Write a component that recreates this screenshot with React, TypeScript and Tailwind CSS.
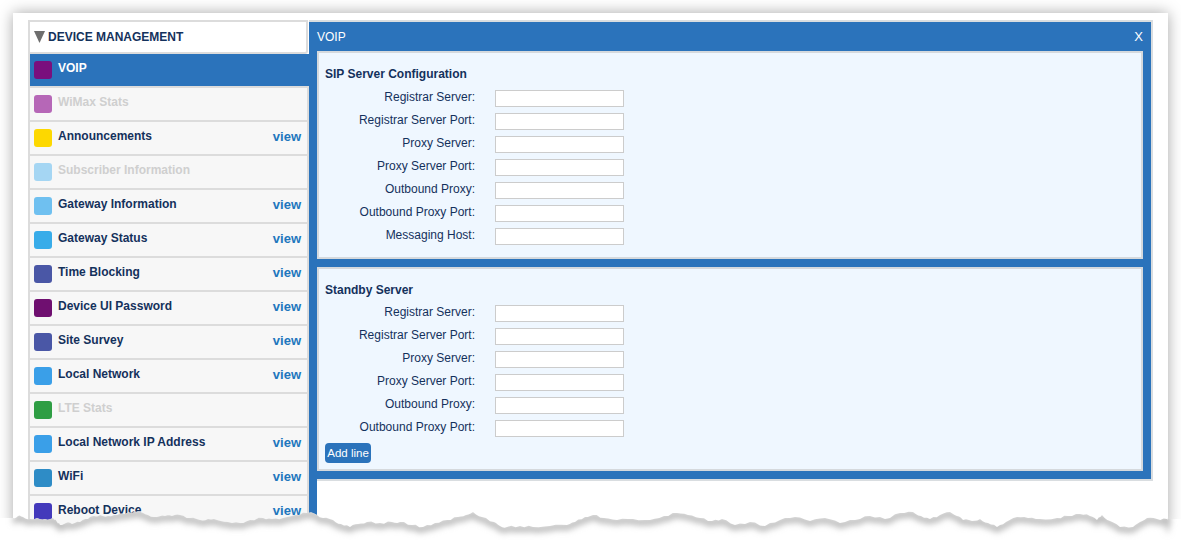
import React from "react";

const menuItems = [
  { name: "VOIP", color: "bg-[#7a0f7d]", active: true },
  { name: "WiMax Stats", color: "bg-[#b667b7]", disabled: true },
  { name: "Announcements", color: "bg-[#fdd800]" },
  { name: "Subscriber Information", color: "bg-[#a5d6f3]", disabled: true },
  { name: "Gateway Information", color: "bg-[#6fc0f0]" },
  { name: "Gateway Status", color: "bg-[#38ace9]" },
  { name: "Time Blocking", color: "bg-[#4a57a6]" },
  { name: "Device UI Password", color: "bg-[#6f0f70]" },
  { name: "Site Survey", color: "bg-[#4a57a6]" },
  { name: "Local Network", color: "bg-[#3a9fe8]" },
  { name: "LTE Stats", color: "bg-[#2f9e44]", disabled: true },
  { name: "Local Network IP Address", color: "bg-[#3a9fe8]" },
  { name: "WiFi", color: "bg-[#2e8cc6]" },
  { name: "Reboot Device", color: "bg-[#4339bb]" },
];

const sipFields = [
  "Registrar Server:",
  "Registrar Server Port:",
  "Proxy Server:",
  "Proxy Server Port:",
  "Outbound Proxy:",
  "Outbound Proxy Port:",
  "Messaging Host:",
];

const standbyFields = sipFields.slice(0, 6);

// traced from the torn bottom edge of the screenshot
const tearBase =
  "13,518 18,516 23,517 30,519 37,518 45,519 53,518 57,522 60,525 66,523 72,524 80,522 88,519 94,516 100,515 108,516 117,515 125,514 132,513 140,512 148,515 157,517 165,516 172,516 180,515 190,518 200,520 208,519 217,520 228,522 240,523 250,520 263,518 272,519 283,518 295,515 307,513 313,513 323,518 333,520 341,524 350,527 358,524 367,522 380,523 392,522 400,522 412,525 423,527 435,523 447,520 458,517 466,515 473,512 482,517 494,522 500,526 507,527 520,526 533,527 550,526 567,525 575,522 585,517 593,515 604,518 617,520 633,519 650,520 664,516 677,513 688,515 700,518 712,521 722,519 735,525 750,522 765,526 780,520 795,517 810,521 825,518 840,523 855,520 870,516 885,519 900,513 913,512 921,516 930,519 940,515 950,512 957,516 963,520 972,521 980,519 988,523 997,527 1006,522 1017,517 1028,518 1040,519 1057,518 1068,516 1080,514 1090,516 1097,520 1102,515 1110,521 1120,527 1133,527 1140,522 1147,518 1157,519 1167,519 1168,519";

// little fixed wobble between the traced points so the edge looks ragged
const tear = tearBase
  .split(" ")
  .map((p) => p.split(",").map(Number))
  .flatMap(([x, y], i, all) => {
    const next = all[i + 1];
    if (!next) return [`${x},${y}`];
    const out = [`${x},${y}`];
    const steps = 3;
    for (let s = 1; s < steps; s++) {
      const mx = x + ((next[0] - x) * s) / steps;
      const my = y + ((next[1] - y) * s) / steps;
      const wobble = Math.sin(mx * 1.7 + s * 2.3) * 1;
      out.push(`${mx.toFixed(1)},${(my + wobble).toFixed(1)}`);
    }
    return out;
  })
  .join(" ");

const TornEdge = () => (
  <svg className="absolute inset-0 pointer-events-none" width="1181" height="542" viewBox="0 0 1181 542">
    <defs>
      <clipPath id="below">
        <polygon points={`0,542 0,518 ${tear} 1181,519 1181,542`} />
      </clipPath>
      <filter id="blur" x="-5%" y="-500%" width="110%" height="1100%">
        <feGaussianBlur stdDeviation="3" />
      </filter>
    </defs>
    <polygon points={`0,542 0,518 ${tear} 1181,519 1181,542`} fill="#fff" />
    <g clipPath="url(#below)">
      <polyline points={tear} transform="translate(0,2)" fill="none" stroke="#b4b4b4" strokeWidth="6" filter="url(#blur)" />
    </g>
  </svg>
);

const MenuRow = ({ item }: { item: (typeof menuItems)[number] }) => {
  if (item.active) {
    return (
      <div className="h-[34px] border-b-2 border-[#dcdcdc] bg-[#2b73bb] flex">
        <div className={`ml-[4px] mt-[7px] w-[18px] h-[18px] rounded-[3px] ${item.color}`} />
        <span className="ml-[6px] mt-[6px] text-[12px] leading-[16px] font-bold text-white">{item.name}</span>
      </div>
    );
  }
  return (
    <div className="h-[34px] border-b-2 border-r-2 border-[#dcdcdc] bg-[#f7f7f7] flex">
      <div className={`ml-[4px] mt-[7px] w-[18px] h-[18px] rounded-[3px] ${item.color}`} />
      <span className={`ml-[6px] mt-[6px] text-[12px] leading-[16px] font-bold ${item.disabled ? "text-[#cfcfcf]" : "text-[#14315c]"}`}>
        {item.name}
      </span>
      {!item.disabled && (
        <span className="ml-auto mr-[6px] mt-[6px] text-[13px] leading-[18px] font-bold text-[#2176bd]">view</span>
      )}
    </div>
  );
};

const Field = ({ label }: { label: string }) => (
  <div className="h-[23px] flex items-start">
    <label className="w-[150px] text-right text-[12px] leading-[15px] text-[#14315c]">{label}</label>
    <input className="ml-[20px] w-[129px] h-[17px] bg-white border border-[#cccccc]" />
  </div>
);

const Section = ({ title, fields, gap, children, className }: { title: string; fields: string[]; gap: string; children?: React.ReactNode; className: string }) => (
  <div className={`border-2 border-[#d5d9dd] bg-[#eff7ff] pl-[6px] pt-[14px] ${className}`}>
    <h3 className="text-[12px] leading-[15px] font-bold text-[#14315c]">{title}</h3>
    <div className={gap}>
      {fields.map((f) => (
        <Field key={f} label={f} />
      ))}
    </div>
    {children}
  </div>
);

const App = () => {
  return (
    <div className="relative h-[542px] w-[1181px] overflow-hidden bg-white font-['Liberation_Sans',Arial,sans-serif]">
      <div className="absolute left-[13px] top-[13px] w-[1155px] h-[515px] bg-white shadow-[0_0_14px_rgba(0,0,0,0.35)]" />
      <div className="relative pt-[20px] pl-[28px] flex h-[530px]">
        {/* left menu */}
        <div className="w-[281px] shrink-0 border-l-2 border-[#dcdcdc]">
          <div className="h-[34px] border-2 border-l-0 border-[#dcdcdc] bg-white rounded-br-[3px] w-[278px] flex items-center text-[12px] font-bold text-[#14315c]">
            <svg className="ml-[4px] mr-[3px]" width="11" height="12" viewBox="0 0 11 12">
              <polygon points="0,0 11,0 5.5,12" fill="#6e6e6e" />
            </svg>
            DEVICE MANAGEMENT
          </div>
          {menuItems.map((item) => (
            <MenuRow key={item.name} item={item} />
          ))}
        </div>

        {/* right panel */}
        <div className="w-[844px] flex flex-col">
          <div className="h-[459px] border-t-2 border-r-2 border-[#d9dde0] bg-[#2b73bb] pl-[8px] pr-[8px]">
            <div className="h-[29px] flex items-center justify-between text-[12px] text-white">
              <span>VOIP</span>
              <span className="text-[13px]">X</span>
            </div>
            <Section title="SIP Server Configuration" fields={sipFields} gap="mt-[8px]" className="h-[208px]" />
            <div className="h-[8px]" />
            <Section title="Standby Server" fields={standbyFields} gap="mt-[7px]" className="h-[204px]">
              <button className="block w-[46px] h-[20px] pt-[1px] rounded-[4px] bg-[#2b73bb] text-white text-[11.5px]">
                Add line
              </button>
            </Section>
          </div>
          <div className="flex-1 border-l-[8px] border-[#2b73bb]">
            <div className="h-[2px] bg-[#d9dde0]" />
          </div>
        </div>
      </div>
      <TornEdge />
    </div>
  );
};

export default App;
